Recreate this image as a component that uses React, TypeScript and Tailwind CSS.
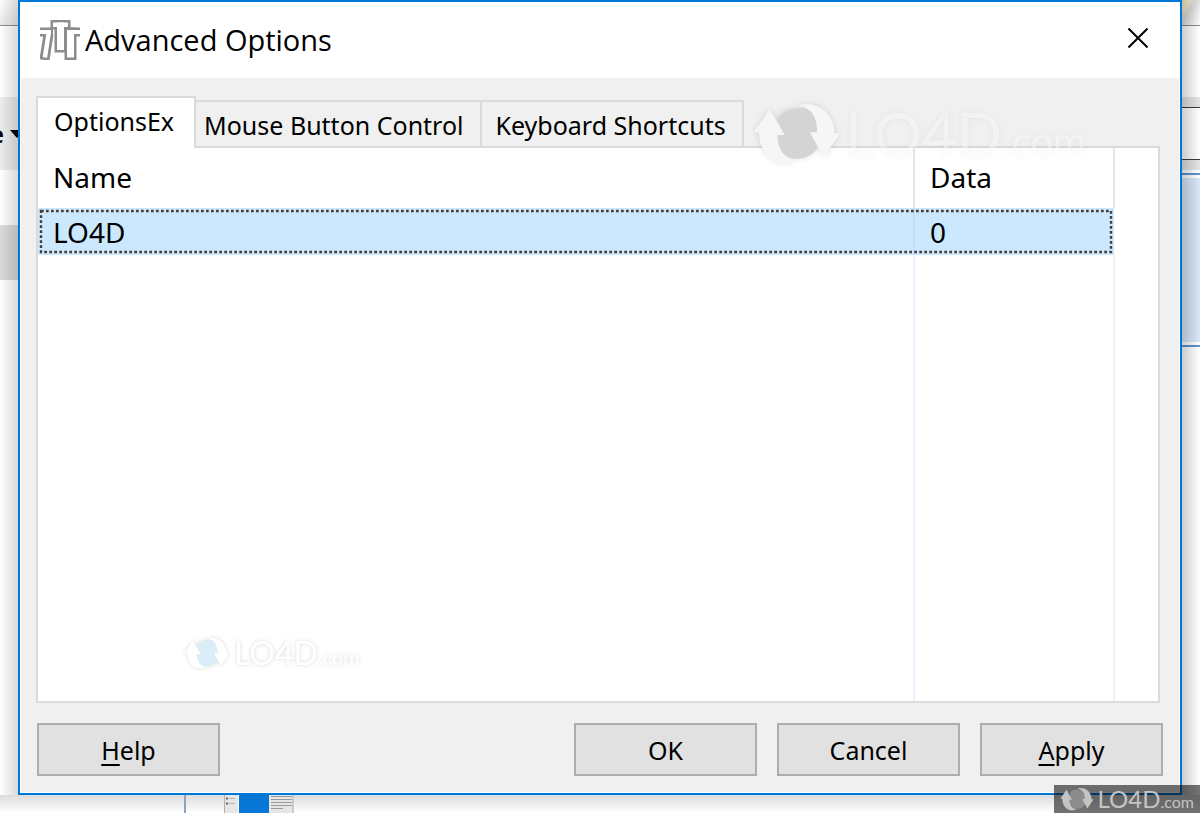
import React from "react";

type MarkProps = {
  className: string;
  globe: string;
  arrows: string;
};

const GlobeMark = ({ className, globe, arrows }: MarkProps) => (
  <svg viewBox="34 66 266 186" className={className} aria-hidden="true">
    <path
      className={globe}
      d="M108 115 C125 90 145 85 170 85 C195 85 215 90 228 105 V155 H208 L232 200 C215 228 190 237 165 237 C140 237 120 225 108 205 V165 H130 L108 125 Z"
    />
    <path
      className={arrows}
      d="M85 87 L37 157 H52 C52 210 88 249 128 249 C142 249 154 246 162 240 C130 235 108 212 108 165 H130 Z"
    />
    <path
      className={arrows}
      d="M172 76 C195 68 236 72 258 100 C274 120 280 140 280 160 H297 L248 233 L206 157 H228 C228 108 210 84 172 76 Z"
    />
  </svg>
);

const AppIcon = () => (
  <svg viewBox="0 0 40 40" className="h-10 w-10" aria-hidden="true">
    <g fill="#8c8c8c" stroke="#8c8c8c" strokeWidth="0">
      <rect x="-1" y="7.5" width="14" height="9" />
      <path d="M8.5 14 L4.5 40" strokeWidth="10" />
      <rect x="24.5" y="7.5" width="15.5" height="9" />
      <rect x="24.5" y="7.5" width="12" height="32.5" />
    </g>
    <g fill="#fff" stroke="#fff" strokeWidth="0">
      <rect x="-1" y="10" width="12" height="4" />
      <path d="M8.7 13 L4.9 37.5" strokeWidth="4.5" />
      <rect x="27" y="10" width="13" height="4" />
      <rect x="27" y="10" width="7" height="27.5" />
    </g>
    <g fill="#8c8c8c">
      <rect x="10.5" y="0" width="20" height="9.5" />
      <rect x="14.5" y="0" width="12" height="32.5" />
    </g>
    <g fill="#fff">
      <rect x="13" y="2.5" width="15" height="4.5" />
      <rect x="17" y="2.5" width="7" height="27.5" />
    </g>
  </svg>
);

type TabProps = {
  label: string;
  className: string;
};

const Tab = ({ label, className }: TabProps) => (
  <button
    type="button"
    role="tab"
    aria-selected="false"
    className={`-ml-0.5 h-[46px] border-2 border-b-0 border-[#dadada] bg-[#f0f0f0] pt-0.5 ${className}`}
  >
    {label}
  </button>
);

type DialogButtonProps = {
  label: string;
  accessKey?: boolean;
};

const DialogButton = ({ label, accessKey }: DialogButtonProps) => (
  <button
    type="button"
    className="h-[53px] w-[183px] border-2 border-[#adadad] bg-[#e1e1e1]"
  >
    {accessKey ? (
      <>
        <u className="decoration-2 underline-offset-4">{label[0]}</u>
        {label.slice(1)}
      </>
    ) : (
      label
    )}
  </button>
);

const LeftBackdrop = () => (
  <div className="relative flex w-[18px] flex-col overflow-hidden bg-white">
    <div className="h-[26px] border-b border-[#8c8c8c] bg-gradient-to-b from-white to-[#e9e9e9]" />
    <div className="h-[71px]" />
    <div className="flex h-[73px] items-center justify-end bg-[#ececec]">
      <span className="text-2xl font-semibold">e</span>
      <svg viewBox="0 0 14 8" className="ml-1.5 h-2 w-2 shrink-0" preserveAspectRatio="xMinYMin slice">
        <path d="M0 0 H14 L7 8 Z" />
      </svg>
    </div>
    <div className="h-[55px]" />
    <div className="h-[55px] bg-[#dadada]" />
    <div className="absolute inset-0 bg-gradient-to-r from-transparent to-black/15" />
  </div>
);

const RightBackdrop = () => (
  <div className="relative flex w-[18px] flex-col bg-white">
    <div className="h-[26px] border-b border-[#8c8c8c] bg-gradient-to-br from-[#f4f0c8] from-20% via-[#dcdcdc] via-40% to-white" />
    <div className="h-[71px]" />
    <div className="h-[10px] bg-[#e4e4e4]" />
    <div className="h-[53px] border-y border-[#3c3c3c]" />
    <div className="h-[10px] bg-[#e4e4e4]" />
    <div className="mt-[3px] h-[174px] border-y-2 border-[#5f93d2] py-[3px]">
      <div className="h-full bg-[#d9e7f8]" />
    </div>
    <div className="absolute inset-0 bg-gradient-to-l from-transparent to-black/20" />
  </div>
);

const BottomBackdrop = () => (
  <div className="flex h-[18px] bg-gradient-to-b from-[#dcdcdc] to-white pl-[184px]">
    <div className="w-0.5 bg-[#8ea3bf]" />
    <svg viewBox="0 0 70 18" className="ml-[38px] h-[18px] w-[70px]" aria-hidden="true">
      <rect width="70" height="18" fill="#e6e6e6" />
      <path d="M0.5 0 V18 M69 0 V18" stroke="#b0b0b0" />
      <path d="M2 3.5 H4 M2 8.5 H4" stroke="#666" strokeWidth="2" />
      <path d="M5 3.5 H11 M5 8.5 H11" stroke="#b0b0b0" />
      <rect x="14" width="31" height="18" fill="#fff" />
      <rect x="15" width="30" height="18" fill="#0876d4" />
      <path d="M47 1.5 H68 M47 4.5 H68 M47 7.5 H68 M47 10.5 H68 M47 13.5 H59" stroke="#999" />
    </svg>
  </div>
);

const App = () => {
  return (
    <div className="relative flex min-h-screen w-full flex-col overflow-hidden bg-white font-['Noto_Sans','Open_Sans',sans-serif] text-black">
      <div className="flex flex-1">
        <LeftBackdrop />

        <main className="flex min-w-0 flex-1 flex-col border-2 border-[#0078d7] bg-white">
          {/* Title bar */}
          <header className="flex h-[76px] items-center pr-7 pl-5">
            <AppIcon />
            <h1 className="ml-[5px] flex-1 font-['Open_Sans',sans-serif] text-[29px]">
              Advanced Options
            </h1>
            <button type="button" aria-label="Close" className="mb-1 p-1">
              <svg viewBox="0 0 20 20" className="h-5 w-5">
                <path d="M0.5 0.5 L19.5 19.5 M19.5 0.5 L0.5 19.5" stroke="#000" strokeWidth="2" />
              </svg>
            </button>
          </header>

          <div className="mx-px mb-px flex flex-1 flex-col bg-[#f0f0f0] pt-[18px] pr-4 pb-4 pl-[15px] text-[25px] leading-8">
            {/* Tabs */}
            <div role="tablist" className="flex h-[50px] items-end">
              <button
                type="button"
                role="tab"
                aria-selected="true"
                className="relative z-10 -mb-0.5 h-[52px] border-2 border-b-0 border-[#dadada] bg-white pr-5 pb-1 pl-4"
              >
                OptionsEx
              </button>
              <Tab label="Mouse Button Control" className="pr-4 pl-2" />
              <Tab label="Keyboard Shortcuts" className="pr-4 pl-3.5" />
            </div>

            {/* List */}
            <div className="mr-[3px] flex flex-1 border-2 border-[#dadada] bg-white">
              <div className="flex flex-1 pr-[43px]">
                <table className="h-full w-full table-fixed border-collapse text-left text-[28px]">
                  <colgroup>
                    <col />
                    <col className="w-[200px]" />
                  </colgroup>
                  <thead>
                    <tr className="h-[60px]">
                      <th className="border-r-2 border-[#e5e5e5] px-[15px] pb-0.5 font-normal">Name</th>
                      <th className="border-r-2 border-[#e5e5e5] px-[15px] pb-0.5 font-normal">Data</th>
                    </tr>
                  </thead>
                  <tbody>
                    <tr className="relative h-[47px] bg-[#cce8ff]">
                      <td className="border-r-2 border-[#bfe0ff] px-[15px]">LO4D</td>
                      <td className="px-[15px]">
                        0
                        <svg
                          className="absolute top-[3px] left-[3px] h-[calc(100%-6px)] w-[calc(100%-6px)] overflow-visible"
                          aria-hidden="true"
                        >
                          <rect
                            width="100%"
                            height="100%"
                            fill="none"
                            stroke="#4a3c34"
                            strokeWidth="2.4"
                            strokeDasharray="2.7 2.3"
                          />
                        </svg>
                      </td>
                    </tr>
                    <tr>
                      <td className="border-r-2 border-[#eaf3fd]" />
                      <td className="border-r-2 border-[#eaf3fd]" />
                    </tr>
                  </tbody>
                </table>
              </div>
            </div>

            {/* Footer buttons */}
            <div className="mt-5 ml-px flex justify-between">
              <DialogButton label="Help" accessKey />
              <div className="flex gap-5">
                <DialogButton label="OK" />
                <DialogButton label="Cancel" />
                <DialogButton label="Apply" accessKey />
              </div>
            </div>
          </div>
        </main>

        <RightBackdrop />
      </div>

      <BottomBackdrop />

      {/* Watermarks */}
      <div className="pointer-events-none absolute top-[102px] right-[114px] flex items-center font-['Lato',sans-serif] text-white/40 drop-shadow-[0_0_3px_rgba(0,0,0,0.12)]">
        <GlobeMark className="h-[62px] w-[88px]" globe="fill-[#d4d4d4]" arrows="fill-[#f6f6f6]" />
        <div className="ml-1 flex items-baseline leading-none">
          <span className="text-[60px]">LO4D</span>
          <span className="text-[40px]">.com</span>
        </div>
      </div>
      <div className="pointer-events-none absolute bottom-[144px] left-[184px] flex items-center font-['Lato',sans-serif] text-white drop-shadow-[0_0_2px_rgba(0,0,0,0.15)]">
        <GlobeMark className="h-8 w-[46px]" globe="fill-[#d9eef7]" arrows="fill-white" />
        <div className="ml-1 flex items-baseline leading-none">
          <span className="text-[32px]">LO4D</span>
          <span className="text-[20px]">.com</span>
        </div>
      </div>
      <div className="absolute right-0 bottom-0 flex h-7 items-center bg-black/55 pr-1.5 pl-1.5 font-['Lato',sans-serif] text-[#c4c4c4]">
        <GlobeMark className="h-6 w-[34px]" globe="fill-[#8c8c8c]" arrows="fill-[#c4c4c4]" />
        <div className="ml-1 flex items-baseline leading-none">
          <span className="text-2xl leading-none">LO4D</span>
          <span className="text-base leading-none">.com</span>
        </div>
      </div>
    </div>
  );
};

export default App;
